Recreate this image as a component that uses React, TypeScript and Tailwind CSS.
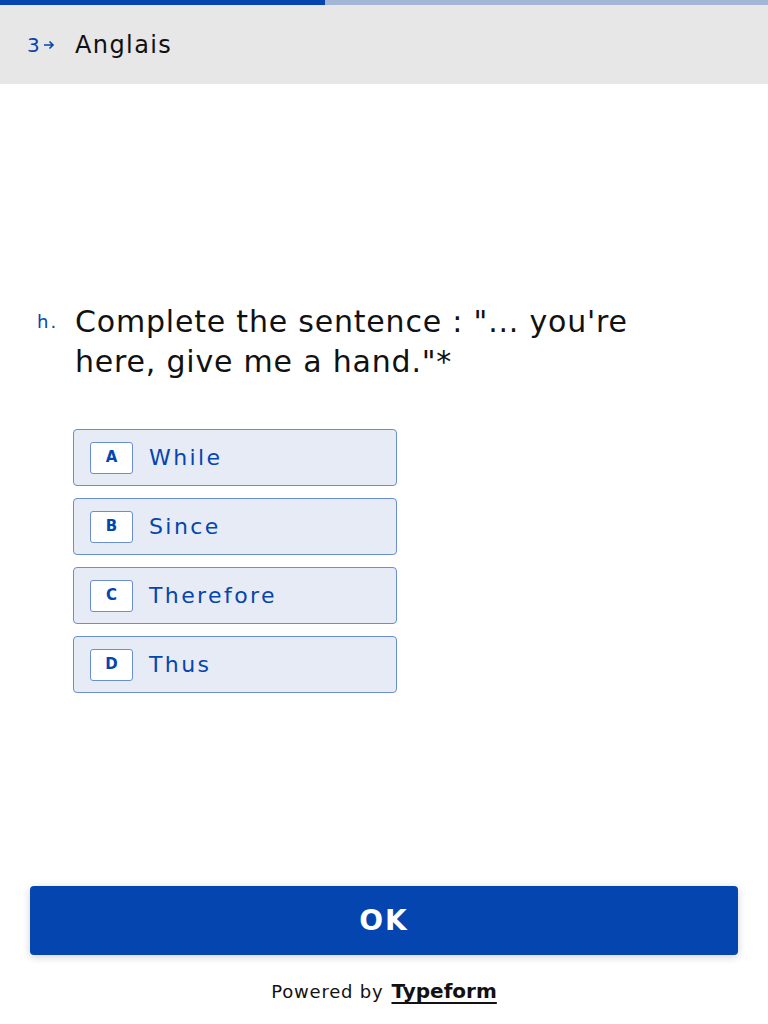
import React from "react";

const options = [
  { key: "A", label: "While" },
  { key: "B", label: "Since" },
  { key: "C", label: "Therefore" },
  { key: "D", label: "Thus" },
];

export default function App() {
  return (
    <div className="relative h-[1024px] w-[768px] overflow-hidden bg-white font-['DejaVu_Sans','Liberation_Sans',sans-serif]">
      {/* progress */}
      <div className="flex h-[5px] w-full bg-[#a3b6d8]">
        <div className="h-full w-[325px] bg-[#0445af]" />
      </div>

      {/* header */}
      <div className="flex h-[79px] items-center bg-[#e7e7e7] pl-[27px]">
        <span className="flex w-[48px] items-center text-[20px] text-[#0445af]">
          3
          <svg width="12" height="12" viewBox="0 0 12 12" className="ml-[3px]">
            <path d="M1 6h9M6.5 2.5 10 6l-3.5 3.5" fill="none" stroke="#0445af" strokeWidth="1.6" />
          </svg>
        </span>
        <span className="text-[24px] tracking-[1.4px] text-[#111]">Anglais</span>
      </div>

      {/* question */}
      <div className="mt-[218px] flex pl-[37px]">
        <span className="w-[38px] pt-[11px] text-[18px] leading-none tracking-[2px] text-[#0445af]">h.</span>
        <h1 className="w-[620px] text-[30px] leading-[40px] tracking-[0.8px] text-[#111]">
          Complete the sentence : "... you're here, give me a hand."*
        </h1>
      </div>

      {/* options */}
      <div className="mt-[47px] flex flex-col gap-[12px] pl-[73px]">
        {options.map((o) => (
          <div
            key={o.key}
            className="flex h-[57px] w-[324px] items-center rounded-[4px] border border-[#6a8fd0] bg-[#e6ebf5] pl-[16px]"
          >
            <span className="flex h-[32px] w-[43px] items-center justify-center rounded-[3px] border border-[#6a8fd0] bg-white text-[15px] font-bold text-[#0445af]">
              {o.key}
            </span>
            <span className="ml-[16px] text-[22px] tracking-[2.4px] text-[#0445af]">{o.label}</span>
          </div>
        ))}
      </div>

      {/* ok */}
      <div className="absolute left-[30px] right-[30px] top-[886px]">
        <button className="flex h-[69px] w-full items-center justify-center rounded-[4px] bg-[#0445af] text-[28px] font-bold tracking-[2px] text-white shadow-[0_2px_8px_rgba(0,0,0,0.18)]">
          OK
        </button>
        <div className="mt-[21px] flex items-baseline justify-center gap-[8px] text-[#111]">
          <span className="text-[18px] tracking-[0.8px]">Powered by</span>
          <span className="text-[20px] font-bold underline underline-offset-[4px]">Typeform</span>
        </div>
      </div>
    </div>
  );
}
